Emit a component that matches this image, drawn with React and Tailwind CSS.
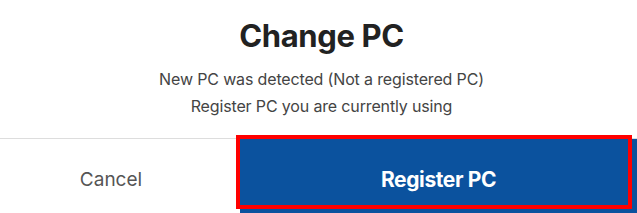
export default function App() {
  return (
    <div className="relative w-[637px] h-[213px] overflow-hidden bg-white font-['Inter',sans-serif]">
      <div className="flex h-[138px] flex-col items-center pl-[6px] pt-[17px]">
        <h1 className="text-[31px] font-bold leading-[38px] tracking-[-0.4px] text-[#222]">
          Change PC
        </h1>
        <p className="mt-[11px] text-center text-[16px] leading-[27px] tracking-[-0.15px] text-[#444]">
          New PC was detected (Not a registered PC)
          <br />
          Register PC you are currently using
        </p>
      </div>

      <div className="flex h-[75px] border-t border-[#dddddd]">
        <button className="w-[240px] pr-[18px] pt-[8px] text-[19px] text-[#555]">
          Cancel
        </button>
        <button className="flex-1 bg-[#0b529e] pt-[8px] text-[21px] font-bold tracking-[-0.4px] text-white">
          Register PC
        </button>
      </div>

      {/* highlight box */}
      <div className="pointer-events-none absolute left-[236px] top-[135px] h-[74px] w-[396px] border-4 border-[#ff0000]" />
    </div>
  );
}
